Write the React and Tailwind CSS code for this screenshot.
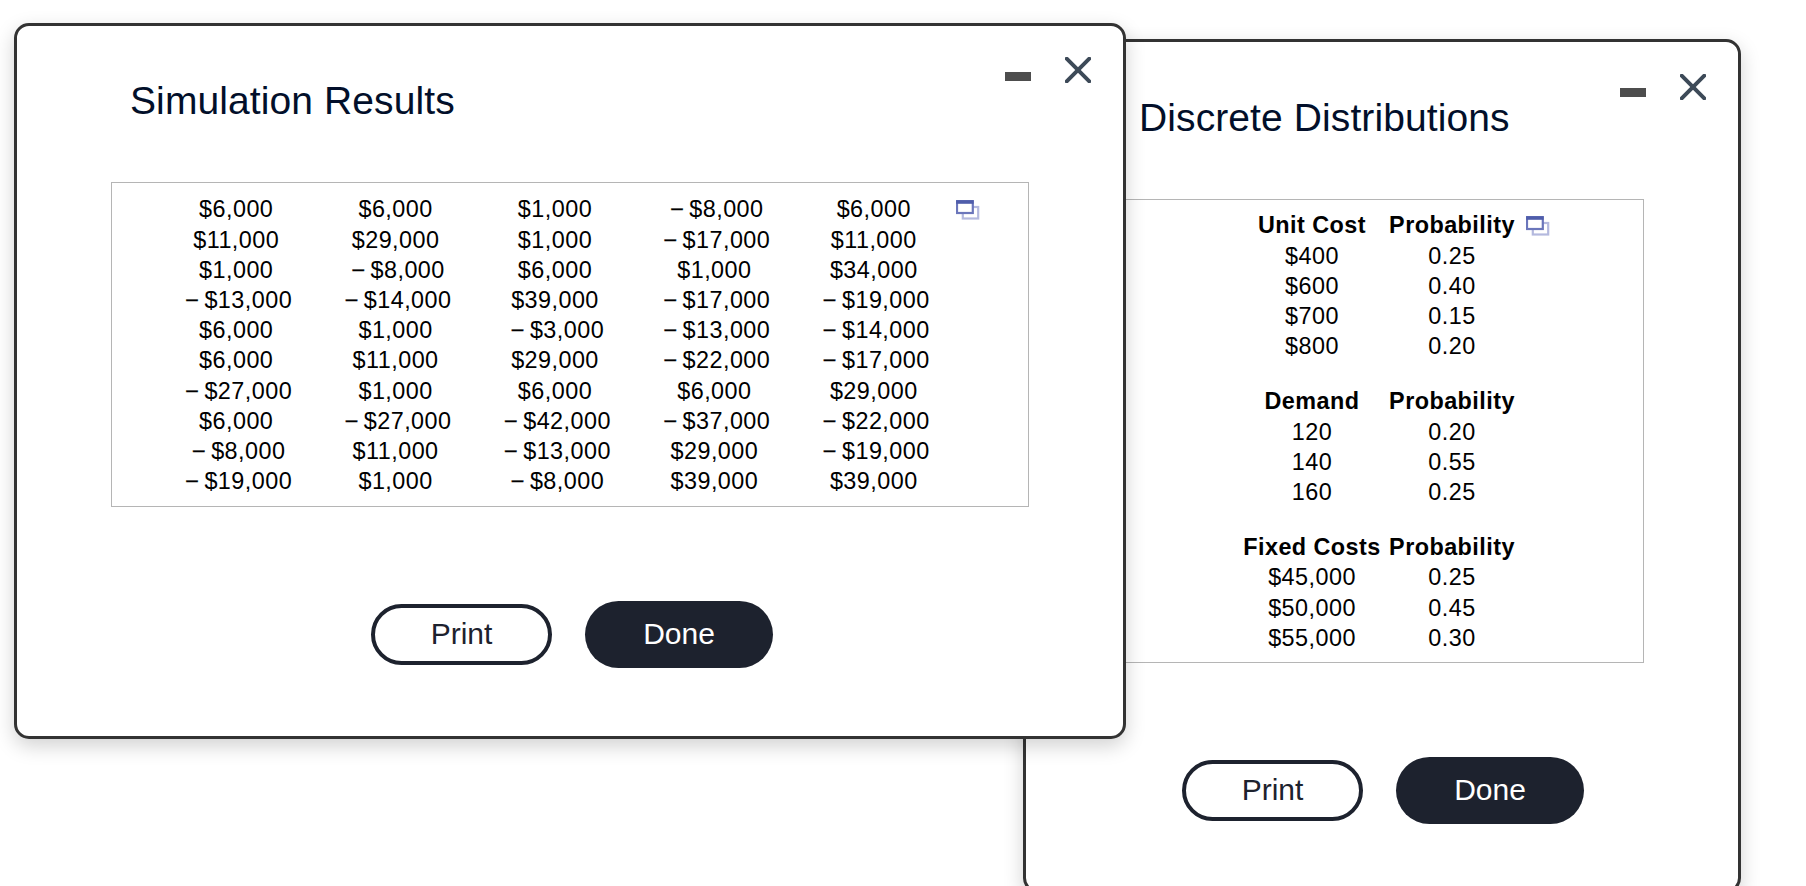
import { X } from 'lucide-react'

const results = [
  [6000, 6000, 1000, -8000, 6000],
  [11000, 29000, 1000, -17000, 11000],
  [1000, -8000, 6000, 1000, 34000],
  [-13000, -14000, 39000, -17000, -19000],
  [6000, 1000, -3000, -13000, -14000],
  [6000, 11000, 29000, -22000, -17000],
  [-27000, 1000, 6000, 6000, 29000],
  [6000, -27000, -42000, -37000, -22000],
  [-8000, 11000, -13000, 29000, -19000],
  [-19000, 1000, -8000, 39000, 39000],
]

const distributions = [
  {
    label: 'Unit Cost',
    rows: [['$400', '0.25'], ['$600', '0.40'], ['$700', '0.15'], ['$800', '0.20']],
  },
  {
    label: 'Demand',
    rows: [['120', '0.20'], ['140', '0.55'], ['160', '0.25']],
  },
  {
    label: 'Fixed Costs',
    rows: [['$45,000', '0.25'], ['$50,000', '0.45'], ['$55,000', '0.30']],
  },
]

function CopyIcon({ className }) {
  return (
    <svg className={className} width="24" height="20" viewBox="0 0 24 20" fill="none">
      <rect x="6.8" y="7" width="15.4" height="11.5" fill="#fff" stroke="#b4b9de" strokeWidth="2.2" />
      <rect x="1" y="1.2" width="15.8" height="11.8" fill="#fff" stroke="#6b76bb" strokeWidth="2.2" />
      <path d="M0.2 2h17.4" stroke="#4f5dab" strokeWidth="3.6" />
    </svg>
  )
}

function Amount({ value }) {
  const text = '$' + Math.abs(value).toLocaleString('en-US')
  if (value >= 0) return <span>{text}</span>
  return (
    <span className="pl-[5px]">
      <span className="mr-[5px] [-webkit-text-stroke:0.4px_black]">−</span>
      {text}
    </span>
  )
}

function Dialog({ title, className, headerClass, closeClass = '', children }) {
  return (
    <section
      className={`absolute flex flex-col bg-white border-3 border-[#333] rounded-[15px] shadow-[0_7px_20px_rgba(0,0,0,0.18)] ${className}`}
    >
      <header className="flex justify-between pl-[113px] pr-8">
        <h1 className={`text-[39px] leading-[44px] tracking-[0.1px] text-[#020f2a] whitespace-nowrap ${headerClass}`}>
          {title}
        </h1>
        <div className="flex gap-[34px] pt-[31px]">
          <button className="mt-[15px] w-[26px] h-[9px] bg-[#4d4d4d]" aria-label="Minimize" />
          <button className={`w-[26px] h-[26px] ${closeClass}`} aria-label="Close">
            <X className="w-[26px] h-[26px] text-[#3d4a58]" viewBox="5.1 5.1 13.8 13.8" strokeWidth={2.1} />
          </button>
        </div>
      </header>
      {children}
    </section>
  )
}

function Actions({ className }) {
  return (
    <div className={`flex items-center gap-[33px] text-[30px] ${className}`}>
      <button className="w-[181px] h-[61px] pb-[2px] rounded-full border-4 border-[#1d222e] text-[#1d222e]">
        Print
      </button>
      <button className="w-[188px] h-[67px] pb-[2px] rounded-full bg-[#1d222e] text-white">Done</button>
    </div>
  )
}

export default function App() {
  return (
    <main className="relative h-screen overflow-hidden bg-white font-['Liberation_Sans',Arial,sans-serif]">
      <Dialog
        title="Discrete Distributions"
        className="left-[1023px] top-[39px] w-[718px] h-[854px]"
        headerClass="pt-[54px]"
        closeClass="mt-px"
      >
        <div className="mt-[59px] mx-[94px] h-[464px] shrink-0 flex items-start border border-[#b5b5b5] pt-[10.4px] pl-[121px] text-[23.4px] leading-[30.2px] tracking-[0.45px] text-black">
          <div className="flex flex-col gap-[25px]">
            {distributions.map(({ label, rows }) => (
              <div key={label} className="grid grid-cols-[140px_140px] text-center whitespace-nowrap">
                <b>{label}</b>
                <b>Probability</b>
                {rows.map(([value, probability]) => (
                  <div key={value} className="contents">
                    <span>{value}</span>
                    <span>{probability}</span>
                  </div>
                ))}
              </div>
            ))}
          </div>
          <CopyIcon className="ml-1 mt-[5.6px]" />
        </div>
        <Actions className="mt-[94px] ml-[156px]" />
      </Dialog>

      <Dialog
        title="Simulation Results"
        className="left-[14px] top-[23px] w-[1112px] h-[716px]"
        headerClass="pt-[53px]"
      >
        <div className="mt-[59px] mx-[94px] h-[325px] shrink-0 flex items-start border border-[#b5b5b5] pt-[11.3px] pl-[44.5px] text-[23.4px] leading-[30.2px] tracking-[0.45px] text-black">
          <div className="grid grid-cols-[repeat(5,159.4px)] text-center whitespace-nowrap">
            {results.flat().map((value, i) => (
              <Amount key={i} value={value} />
            ))}
          </div>
          <CopyIcon className="ml-[2.5px] mt-[5.7px]" />
        </div>
        <Actions className="mt-[94px] ml-[354px]" />
      </Dialog>
    </main>
  )
}
